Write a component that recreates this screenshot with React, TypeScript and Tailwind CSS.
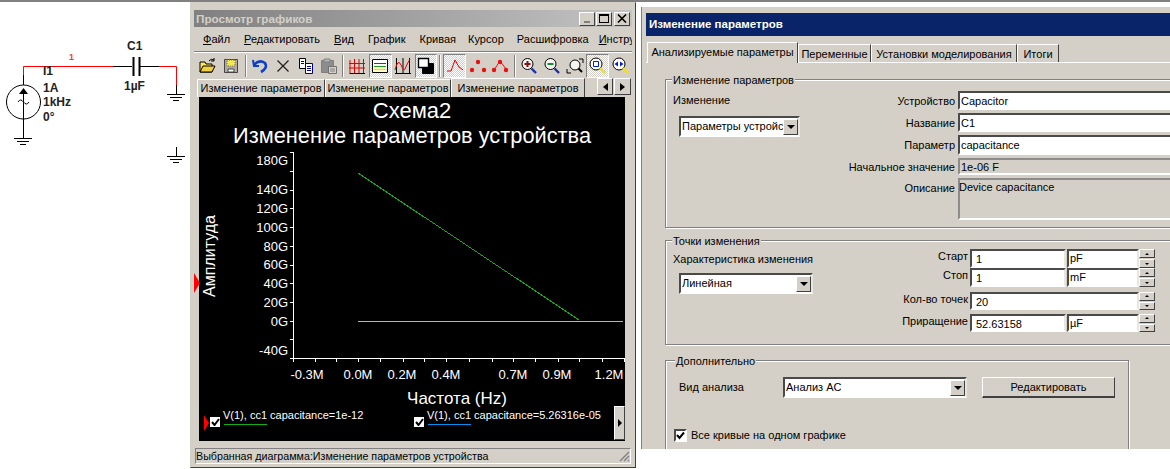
import type { ReactNode } from "react"

const raised = "border border-t-white border-l-white border-r-[#404040] border-b-[#404040] bg-[#d4d0c8]"
const sunken = "border-2 border-t-[#4a4a4a] border-l-[#4a4a4a] border-r-[#e8e6e0] border-b-white"

function Schematic() {
  return (
    <svg width="190" height="469" className="shrink-0 block" fontFamily="Liberation Sans, sans-serif">
      <path d="M23.5 75V66.5H113" fill="none" stroke="#f00" />
      <path d="M113 66.5H132M140 66.5H159" stroke="#000" />
      <path d="M159 66.5H176.5V85" fill="none" stroke="#f00" />
      <path d="M133.5 57V76M139.5 57V76" stroke="#000" strokeWidth="2" />
      <path d="M176.5 85V94M167 94.5H185M170 97.5H182M173 100.5H179" stroke="#000" />
      <path d="M176.5 147V156M167 156.5H185M170 159.5H182M173 162.5H179" stroke="#000" />
      <path d="M23.5 75V85M23.5 118V138M14 138.5H32M17 141.5H29M20 144.5H26" stroke="#000" />
      <circle cx="23.5" cy="102" r="17" fill="none" stroke="#000" />
      <path d="M23.5 88L28 94H19Z" fill="#000" />
      <path d="M23.5 94V118" stroke="#000" />
      <path d="M18 102q2.5 -4 5.5 0t5.5 0" fill="none" stroke="#000" />
      <text x="69" y="60" fontSize="9" fontWeight="700" fill="#f33">1</text>
      <g fontSize="12" fontWeight="700" fill="#222">
        <text x="127" y="50">C1</text>
        <text x="124" y="90">1µF</text>
        <text x="43" y="75">I1</text>
        <text x="43" y="92">1A</text>
        <text x="43" y="106">1kHz</text>
        <text x="43" y="121">0°</text>
      </g>
    </svg>
  )
}

function ToolButton({ pressed, children }: { pressed?: boolean; children: ReactNode }) {
  return (
    <div
      className={
        pressed
          ? "w-[23px] h-[24px] flex items-center justify-center border border-t-[#808080] border-l-[#808080] border-r-white border-b-white bg-[repeating-conic-gradient(#fff_0_25%,#d4d0c8_0_50%)] bg-[length:2px_2px]"
          : "w-[23px] h-[24px] flex items-center justify-center"
      }
    >
      <svg width="18" height="18" viewBox="0 0 18 18" fill="none">
        {children}
      </svg>
    </div>
  )
}

function Sep() {
  return <div className="w-[6px] flex justify-center"><div className="w-[2px] h-[22px] border-l border-[#808080] border-r border-r-white" /></div>
}

const magnifier = (
  <>
    <circle cx="7.5" cy="7" r="5.5" fill="#f4f4f0" stroke="#000" />
    <path d="M11.5 11.5L16 16" stroke="#1c2fa8" strokeWidth="2.4" />
  </>
)

function Toolbar() {
  return (
    <div className="h-[26px] flex items-center pl-[3px] border-t border-white">
      <ToolButton>
        <path d="M1 5H6L7 7H13V15H1Z" fill="#ffe860" stroke="#000" />
        <path d="M1 15L4 9H16L13 15Z" fill="#f0d040" stroke="#000" />
        <path d="M10 4Q12 1 15 3M15 1V4H12" stroke="#000" />
      </ToolButton>
      <ToolButton>
        <path d="M2.5 2.5H15.5V15.5H2.5Z" fill="#b0aca4" stroke="#444" />
        <path d="M5 3H13V9H5Z" fill="#f4e850" stroke="#807040" strokeDasharray="1 1" />
        <path d="M6 12H12V15H6Z" fill="#fff" stroke="#444" />
      </ToolButton>
      <Sep />
      <ToolButton>
        <path d="M3 9L2 3M2 9H8" stroke="#0c3ec8" strokeWidth="2" />
        <path d="M3 8Q8 2 14 6Q17 11 10 15" stroke="#0c3ec8" strokeWidth="2.6" />
      </ToolButton>
      <ToolButton>
        <path d="M3.5 3.5L14.5 14.5M14.5 3.5L3.5 14.5" stroke="#222" strokeWidth="1.3" />
      </ToolButton>
      <ToolButton>
        <path d="M2.5 1.5H8.5V11.5H2.5Z" fill="#fff" stroke="#000" />
        <path d="M8.5 6.5H15.5V16.5H8.5Z" fill="#fff" stroke="#00008c" />
        <path d="M10 9.5H14M10 11.5H14M10 13.5H14M4 4.5H7M4 6.5H7" stroke="#00008c" />
      </ToolButton>
      <ToolButton>
        <path d="M1.5 3.5H13.5V15.5H1.5Z" fill="#8c8c8c" stroke="#808080" />
        <path d="M4 2H10V5H4Z" fill="#b4b4b4" stroke="#808080" />
        <path d="M8.5 9.5H16.5V16.5H8.5Z" fill="#d4d0c8" stroke="#707070" />
        <path d="M10 12H15M10 14H15" stroke="#808080" />
      </ToolButton>
      <Sep />
      <ToolButton>
        <path d="M2 3V16M6.5 2V16M11 2V16M15.5 2V16M1 6.5H17M1 11H17" stroke="#e00000" />
        <path d="M1.5 16.5H17" stroke="#000" />
      </ToolButton>
      <ToolButton pressed>
        <path d="M1.5 2.5H16.5V15.5H1.5Z" fill="#fff" stroke="#000" />
        <path d="M3 6.5H15" stroke="#e00000" />
        <path d="M3 9.5H15" stroke="#18a018" />
        <path d="M3 12.5H15" stroke="#f0e000" strokeWidth="1.6" />
      </ToolButton>
      <ToolButton>
        <path d="M2.5 1V16.5M15.5 1V16.5M9 1V16.5M1 16.5H17" stroke="#000" />
        <path d="M1 13Q4 1 7 8T11 12T16 2" stroke="#e00000" />
      </ToolButton>
      <ToolButton pressed>
        <path d="M5.5 6.5H16.5V16.5H5.5Z" fill="#000" stroke="#000" />
        <path d="M1.5 1.5H11.5V10.5H1.5Z" fill="#fff" stroke="#000" strokeWidth="1.4" />
      </ToolButton>
      <Sep />
      <ToolButton pressed>
        <path d="M1 14H5L9 3L13 10L17 13" stroke="#e00000" />
      </ToolButton>
      <ToolButton>
        <g fill="#e81010">
          <circle cx="3" cy="13" r="2.2" />
          <circle cx="9" cy="5" r="2.2" />
          <circle cx="15" cy="13" r="2.2" />
        </g>
      </ToolButton>
      <ToolButton>
        <path d="M3 13L9 4L15 12" stroke="#e81010" />
        <g fill="#e81010">
          <circle cx="3" cy="13" r="2.2" />
          <circle cx="9" cy="5" r="2.2" />
          <circle cx="15" cy="13" r="2.2" />
        </g>
      </ToolButton>
      <Sep />
      <ToolButton>
        {magnifier}
        <path d="M4.5 7H10.5M7.5 4V10" stroke="#8c1010" strokeWidth="2" />
      </ToolButton>
      <ToolButton>
        {magnifier}
        <path d="M4.5 7H10.5" stroke="#109030" strokeWidth="2" />
      </ToolButton>
      <ToolButton>
        <circle cx="9" cy="8" r="5" fill="#f4f4f0" stroke="#000" />
        <path d="M12.5 11.5L16 15" stroke="#000" strokeWidth="2" />
        <path d="M1 12V16H5M13 2H17V6" stroke="#000" />
      </ToolButton>
      <ToolButton pressed>
        <circle cx="7" cy="7" r="6" fill="#fff" stroke="#000" />
        <path d="M4.5 4.5H9.5V9.5H4.5Z" stroke="#0020d0" />
        <path d="M11 11L16 16" stroke="#f0e020" strokeWidth="2.4" />
      </ToolButton>
      <ToolButton>
        <circle cx="7" cy="7" r="6" fill="#fff" stroke="#000" />
        <path d="M2.5 7L6 4.5V9.5ZM11.5 7L8 4.5V9.5Z" fill="#0020d0" />
        <path d="M11 11L16 16" stroke="#f0e020" strokeWidth="2.4" />
      </ToolButton>
    </div>
  )
}

function Chart() {
  const yTicks = [152, 171, 190, 208, 227, 246, 265, 283, 302, 321, 339, 358]
  const xTicks = [293, 315, 336, 358, 380, 403, 424, 446, 469, 492, 513, 535, 558, 579, 602, 624]
  const yLabels: [string, number][] = [
    ["180G", 165], ["140G", 194], ["120G", 213], ["100G", 232], ["80G", 251], ["60G", 269],
    ["40G", 288], ["20G", 307], ["0G", 326], ["-40G", 355],
  ]
  const xLabels: [string, number][] = [
    ["-0.3M", 307], ["0.0M", 358], ["0.2M", 402], ["0.4M", 446], ["0.7M", 513], ["0.9M", 557], ["1.2M", 609],
  ]
  // chart box starts at x=199, y=148 of the page
  return (
    <svg width="426" height="260" viewBox="199 148 426 260" className="block" fontFamily="Liberation Sans, sans-serif" shapeRendering="crispEdges">
      <path d="M293.5 152V358.5H624" fill="none" stroke="#fff" />
      {yTicks.map((y) => <path key={y} d={`M290 ${y + 0.5}H293`} stroke="#fff" />)}
      {xTicks.map((x) => <path key={x} d={`M${x + 0.5} 358V362`} stroke="#fff" />)}
      <path d="M358 321.5H623" stroke="#d8c020" />
      <path d="M358 173L579 320" stroke="#10b010" />
      <g fill="#fff" fontSize="13">
        {yLabels.map(([t, y]) => <text key={t} x="288" y={y} textAnchor="end">{t}</text>)}
        {xLabels.map(([t, x]) => <text key={t} x={x} y="379" textAnchor="middle">{t}</text>)}
        <text x="457" y="404" fontSize="17" textAnchor="middle">Частота (Hz)</text>
        <text transform="translate(215 256) rotate(-90)" fontSize="16" textAnchor="middle">Амплитуда</text>
      </g>
    </svg>
  )
}

function GraphWindow() {
  return (
    <div className="relative shrink-0 w-[446px] h-[466px] mt-[2px] flex flex-col bg-[#d4d0c8] border border-t-[#d4d0c8] border-l-[#d4d0c8] border-r-[#404040] border-b-[#404040] p-[3px] text-[11px] text-black">
      <div className="h-[17px] mt-[4px] flex items-center justify-between bg-gradient-to-r from-[#808080] to-[#c4c4c4] pl-[2px] pr-[2px]">
        <span className="font-bold text-[11.7px] text-[#d4d0c8]">Просмотр графиков</span>
        <div className="flex gap-[1px]">
          <div className={`${raised} w-[16px] h-[14px] flex items-end justify-center pb-[2px]`}><div className="w-[6px] h-[2px] bg-[#808080]" /></div>
          <div className={`${raised} w-[16px] h-[14px] flex items-center justify-center`}><div className="w-[10px] h-[9px] border border-t-2 border-black" /></div>
          <div className={`${raised} w-[16px] h-[14px] ml-[1px] flex items-center justify-center`}>
            <svg width="10" height="9" viewBox="0 0 10 9"><path d="M1 0.5L9 8.5M9 0.5L1 8.5" stroke="#000" strokeWidth="1.6" /></svg>
          </div>
        </div>
      </div>
      <div className="h-[24px] mt-[1px] flex items-center gap-[14px] pl-[9px] overflow-hidden border-b border-[#808080] whitespace-nowrap">
        <span><u>Ф</u>айл</span>
        <span><u>Р</u>едактировать</span>
        <span><u>В</u>ид</span>
        <span>График</span>
        <span>Кривая</span>
        <span className="-ml-[2px]">Курсор</span>
        <span className="-ml-[1px]">Расшифровка</span>
        <span className="-ml-[4px]"><u>И</u>нструменты</span>
      </div>
      <Toolbar />
      <div className="h-[19px] flex items-end pl-[3px] relative">
        <div className="w-[128px] h-[18px] border border-b-0 border-t-white border-l-white border-r-[#404040] flex items-center justify-center">Изменение параметров</div>
        <div className="w-[126px] h-[18px] border border-b-0 border-t-white border-l-white border-r-[#404040] flex items-center justify-center">Изменение параметров</div>
        <div className="w-[134px] h-[19px] border border-b-0 border-t-white border-l-white border-r-[#404040] flex items-center justify-center">Изменение параметров</div>
        <div className="ml-[12px] self-start flex gap-[1px]">
          <div className={`${raised} w-[16px] h-[17px] flex items-center justify-center`}><div className="w-0 h-0 border-y-[4px] border-y-transparent border-r-[5px] border-r-black" /></div>
          <div className={`${raised} w-[17px] h-[17px] flex items-center justify-center`}><div className="w-0 h-0 border-y-[4px] border-y-transparent border-l-[5px] border-l-black" /></div>
        </div>
      </div>
      <div className="relative ml-[5px] mr-[7px] h-[344px] bg-black text-white overflow-hidden">
        <div className="h-[26px] pt-[1px] text-center text-[22px] leading-[26px]">Схема2</div>
        <div className="h-[25px] text-center text-[21.8px] leading-[25px] whitespace-nowrap">Изменение параметров устройства</div>
        <Chart />
        <div className="h-[33px] flex items-start pl-[5px] text-[11px] leading-[14px]">
          <div className="w-0 h-0 mt-[7px] border-y-[8px] border-y-transparent border-l-[5px] border-l-[#f00]" />
          <div className="w-[10px] h-[10px] bg-white mt-[9px] ml-[1px] flex items-center justify-center">
            <svg width="9" height="8" viewBox="0 0 9 8"><path d="M1 4L3.5 7L8 1" fill="none" stroke="#000" strokeWidth="2" /></svg>
          </div>
          <div className="ml-[3px] w-[191px]">
            <div>V(1), cc1 capacitance=1e-12</div>
            <div className="w-[43px] h-px mt-[2px] ml-px bg-[#10b010]" />
          </div>
          <div className="w-[10px] h-[10px] bg-white mt-[9px] flex items-center justify-center">
            <svg width="9" height="8" viewBox="0 0 9 8"><path d="M1 4L3.5 7L8 1" fill="none" stroke="#000" strokeWidth="2" /></svg>
          </div>
          <div className="ml-[3px]">
            <div className="whitespace-nowrap">V(1), cc1 capacitance=5.26316e-05</div>
            <div className="w-[43px] h-px mt-[2px] ml-px bg-[#0090f0]" />
          </div>
          <div className={`${raised} absolute right-0 bottom-[1px] w-[11px] h-[34px] flex items-center justify-center`}>
            <div className="w-0 h-0 border-y-[4px] border-y-transparent border-l-[4px] border-l-black" />
          </div>
        </div>
      </div>
      <div className="absolute left-[3px] top-[270px] w-0 h-0 border-y-[10px] border-y-transparent border-l-[6px] border-l-[#f00]" />
      <div className="h-[16px] mt-[7px] mx-[1px] flex items-center justify-between border border-t-[#808080] border-l-[#808080] border-r-white border-b-white text-[10.7px]">
        <span>Выбранная диаграмма:Изменение параметров устройства</span>
        <svg width="12" height="12" viewBox="0 0 12 12"><path d="M11 2L2 11M11 6L6 11M11 10L10 11" stroke="#808080" strokeWidth="1.4" /></svg>
      </div>
    </div>
  )
}

function Group({ label, labelClass, className, children }: { label: string; labelClass: string; className: string; children: ReactNode }) {
  return (
    <div className={`relative border border-[#808080] shadow-[inset_1px_1px_0_#fff,1px_1px_0_#fff] ${className}`}>
      <span className={`absolute -top-[7px] ${labelClass} bg-[#d4d0c8] px-px leading-[14px]`}>{label}</span>
      {children}
    </div>
  )
}

function Select({ value, className }: { value: string; className: string }) {
  return (
    <div className={`${className} h-[21px] flex items-center bg-white border-2 border-t-[#4a4a4a] border-l-[#4a4a4a] border-r-[#e8e6e0] border-b-white pl-px overflow-hidden`}>
      <span className="flex-1 min-w-0 overflow-hidden whitespace-nowrap">{value}</span>
      <div className={`${raised} w-[15px] h-[16px] flex items-center justify-center shrink-0`}>
        <div className="w-0 h-0 border-x-[4px] border-x-transparent border-t-[4px] border-t-black" />
      </div>
    </div>
  )
}

function Spinner() {
  return (
    <div className="w-[16px] h-full flex flex-col shrink-0 gap-px">
      <div className={`${raised} flex-1 flex items-center justify-center`}><div className="w-0 h-0 border-x-[2px] border-x-transparent border-b-[2px] border-b-black" /></div>
      <div className={`${raised} flex-1 flex items-center justify-center`}><div className="w-0 h-0 border-x-[2px] border-x-transparent border-t-[2px] border-t-black" /></div>
    </div>
  )
}

function ParamRow({ label, value, h, readonly, top }: { label: string; value: string; h: string; readonly?: boolean; top?: boolean }) {
  return (
    <div className={`flex ${h} ${top ? "items-start" : "items-center"}`}>
      <span className={`flex-1 text-right pr-[3px] leading-[14px] ${top ? "pt-[3px]" : ""}`}>{label}</span>
      <div className={`${readonly ? "border-2 border-t-[#8c8c8c] border-l-[#8c8c8c] border-r-[#e8e6e0] border-b-white" : `${sunken} bg-white`} w-[226px] h-full flex ${top ? "items-start" : "items-center"} leading-[14px]`}>
        <span className={top ? "-ml-px" : "pl-px"}>{value}</span>
      </div>
    </div>
  )
}

function PointRow({ label, value, unit, h }: { label: string; value: string; unit?: string; h: string }) {
  return (
    <div className={`flex ${h}`}>
      <span className="flex-1 text-right pr-[2px] leading-[15px]">{label}</span>
      <div className={`${sunken} ${unit ? "w-[96px]" : "w-[169px]"} bg-white pl-[4px] pt-[1px] leading-[15px]`}>{value}</div>
      {unit && <div className={`${sunken} w-[72px] ml-px bg-white pl-px leading-[15px]`}>{unit}</div>}
      <Spinner />
    </div>
  )
}

function Dialog() {
  const tabClass = "border border-b-0 border-t-white border-l-white border-r-[#404040] flex items-center justify-center"
  return (
    <div className="w-[529px] h-[442px] mt-[7px] ml-[5px] shrink-0 overflow-hidden bg-[#d4d0c8] border-l border-[#808080] pl-[4px] pt-[6px] text-[11px] text-black">
      <div className="h-[23px] bg-[#0a246a] text-white font-bold text-[11.5px] flex items-center pl-[3px]">Изменение параметров</div>
      <div className="h-[27px] flex items-end border-b border-white pl-px">
        <div className={`${tabClass} w-[151px] h-[21px] -mb-px pb-[2px] relative bg-[#d4d0c8]`}>Анализируемые параметры</div>
        <div className={`${tabClass} w-[73px] h-[18px] pt-[2px]`}>Переменные</div>
        <div className={`${tabClass} w-[146px] h-[18px] pt-[2px]`}>Установки моделирования</div>
        <div className={`${tabClass} w-[42px] h-[18px] pt-[2px]`}>Итоги</div>
      </div>
      <div className="pl-[19px] pt-[16px] flex flex-col">
        <Group label="Изменение параметров" labelClass="left-[6px]" className="h-[149px] w-[520px]">
          <div className="flex pt-[11px] pl-[7px]">
            <div className="w-[131px] shrink-0 pt-[2px]">
              <div className="leading-[14px]">Изменение</div>
              <Select value="Параметры устройства" className="w-[121px] mt-[9px] ml-[6px]" />
            </div>
            <div className="flex-1 min-w-0 flex flex-col gap-[3px]">
              <ParamRow label="Устройство" value="Capacitor" h="h-[19px]" />
              <ParamRow label="Название" value="C1" h="h-[19px]" />
              <ParamRow label="Параметр" value="capacitance" h="h-[20px]" />
              <ParamRow label="Начальное значение" value="1e-06 F" h="h-[17px]" readonly />
              <ParamRow label="Описание" value="Device capacitance" h="h-[42px]" readonly top />
            </div>
          </div>
        </Group>
        <Group label="Точки изменения" labelClass="left-[6px]" className="h-[105px] w-[520px] mt-[12px]">
          <div className="flex pt-[8px] pl-[7px]">
            <div className="w-[199px] shrink-0 pt-[3px]">
              <div className="leading-[14px] whitespace-nowrap">Характеристика изменения</div>
              <Select value="Линейная" className="w-[134px] mt-[7px] ml-[6px]" />
            </div>
            <div className="w-[283px] flex flex-col">
              <PointRow label="Старт" value="1" unit="pF" h="h-[19px]" />
              <PointRow label="Стоп" value="1" unit="mF" h="h-[19px]" />
              <div className="h-[5px]" />
              <PointRow label="Кол-во точек" value="20" h="h-[18px]" />
              <div className="h-[4px]" />
              <PointRow label="Приращение" value="52.63158" unit="µF" h="h-[18px]" />
            </div>
          </div>
        </Group>
        <Group label="Дополнительно" labelClass="left-[9px]" className="h-[120px] w-[464px] mt-[15px]">
          <div className="flex items-center pt-[16px] pl-[13px]">
            <span className="w-[104px]">Вид анализа</span>
            <Select value="Анализ AC" className="w-[184px]" />
            <div className="w-[133px] h-[21px] ml-[15px] border border-t-white border-l-white border-r-[#404040] border-b-2 border-b-[#404040] flex items-center justify-center">Редактировать</div>
          </div>
          <div className="flex items-center mt-[29px] pl-[8px]">
            <div className="w-[13px] h-[13px] bg-white border-2 border-t-[#4a4a4a] border-l-[#4a4a4a] border-r-white border-b-white flex items-center justify-center">
              <svg width="9" height="9" viewBox="0 0 9 9"><path d="M1 4L3.5 7L8 1.5" fill="none" stroke="#000" strokeWidth="2" /></svg>
            </div>
            <span className="ml-[4px]">Все кривые на одном графике</span>
          </div>
        </Group>
      </div>
    </div>
  )
}

export default function App() {
  return (
    <div className="w-[1170px] h-[469px] overflow-hidden flex bg-white shadow-[inset_0_2px_0_#808080] [font-family:'Liberation_Sans',sans-serif]">
      <Schematic />
      <GraphWindow />
      <Dialog />
    </div>
  )
}
